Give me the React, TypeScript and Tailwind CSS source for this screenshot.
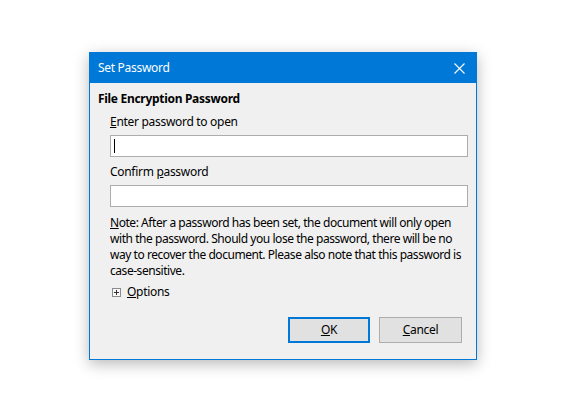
import React from "react";

export default function App() {
  const font = { fontFamily: '"Noto Sans", "Segoe UI", sans-serif' };
  return (
    <div className="w-[575px] h-[409px] bg-white flex pl-[89px] pt-[52px] tracking-[-0.3px]" style={font}>
      <div className="w-[388px] h-[308px] border border-[#0078d7] bg-[#f0f0f0] flex flex-col shadow-[0_4px_14px_rgba(0,0,0,0.28)]">
        <div className="h-[30px] bg-[#0078d7] flex items-center justify-between pl-[8px] pr-[10px] text-white text-[12px]">
          <span>Set Password</span>
          <svg width="11" height="11" viewBox="0 0 11 11" className="mr-[1px]">
            <path d="M0.5 0.5 L10.5 10.5 M10.5 0.5 L0.5 10.5" stroke="white" strokeWidth="1.1" />
          </svg>
        </div>
        <div className="flex flex-col pl-[8px] pr-[8px] text-[12px] text-black">
          <div className="font-bold mt-[8px] leading-[16px]">File Encryption Password</div>
          <div className="pl-[12px] flex flex-col">
            <div className="mt-[7px] leading-[16px]"><span className="underline">E</span>nter password to open</div>
            <div className="mt-[5px] h-[22px] border border-[#adadad] bg-white flex items-center pl-[3px]">
              <div className="w-[1px] h-[14px] bg-black" />
            </div>
            <div className="mt-[7px] leading-[16px]">Confirm <span className="underline">p</span>assword</div>
            <div className="mt-[5px] h-[22px] border border-[#adadad] bg-white" />
            <div className="mt-[8px] leading-[16px] whitespace-nowrap tracking-[-0.45px]">
              <div><span className="underline">N</span>ote: After a password has been set, the document will only open</div>
              <div>with the password. Should you lose the password, there will be no</div>
              <div>way to recover the document. Please also note that this password is</div>
              <div>case-sensitive.</div>
            </div>
            <div className="mt-[5px] flex items-center leading-[16px]">
              <div className="w-[9px] h-[9px] border border-[#8c8c8c] bg-[#f7f7f7] relative ml-[2px] mr-[6px]">
                <div className="absolute left-[1px] top-[3px] w-[5px] h-[1px] bg-[#333]" />
                <div className="absolute left-[3px] top-[1px] w-[1px] h-[5px] bg-[#333]" />
              </div>
              <span><span className="underline">O</span>ptions</span>
            </div>
          </div>
        </div>
        <div className="flex justify-end gap-[9px] pr-[14px] mt-[17px]">
          <button className="w-[82px] h-[26px] border-2 border-[#0078d7] bg-[#e1e1e1] text-[12px] text-black flex items-center justify-center">
            <span><span className="underline">O</span>K</span>
          </button>
          <button className="w-[83px] h-[26px] border border-[#adadad] bg-[#e1e1e1] text-[12px] text-black flex items-center justify-center">
            <span><span className="underline">C</span>ancel</span>
          </button>
        </div>
      </div>
    </div>
  );
}
